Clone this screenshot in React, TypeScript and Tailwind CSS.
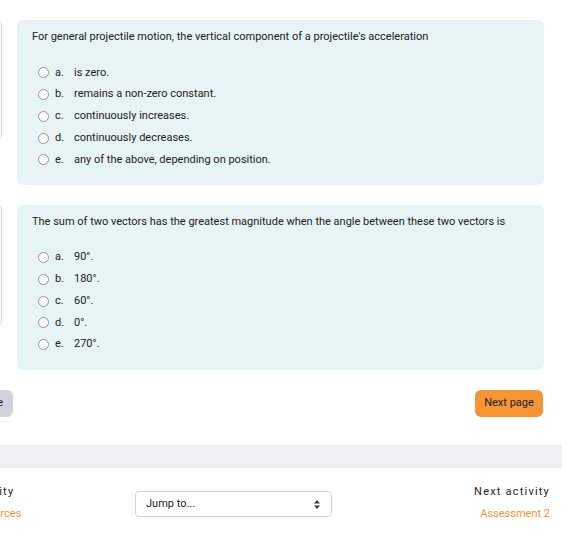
import React from "react";

const QUESTIONS = [
  {
    text: "For general projectile motion, the vertical component of a projectile's acceleration",
    options: [
      "is zero.",
      "remains a non-zero constant.",
      "continuously increases.",
      "continuously decreases.",
      "any of the above, depending on position.",
    ],
  },
  {
    text: "The sum of two vectors has the greatest magnitude when the angle between these two vectors is",
    options: ["90°.", "180°.", "60°.", "0°.", "270°."],
  },
];

const LETTERS = ["a.", "b.", "c.", "d.", "e."];

function Question({ text, options }: { text: string; options: string[] }) {
  return (
    <div className="flex gap-[15px]">
      <div className="h-[120px] w-[84px] shrink-0 rounded border border-[#dee2e6] bg-[#f8f9fa]" />
      <div className="flex-1 rounded-md bg-[#e7f3f5] px-[15px] pb-[14px] pt-[9px]">
        <p className="leading-[16px]">{text}</p>
        <div className="mt-[17px]">
          {options.map((opt, i) => (
            <div key={i} className="flex h-[21.75px] items-center pl-[6px]">
              <span className="h-[11px] w-[11px] shrink-0 rounded-full border border-[#8f959e] bg-white" />
              <span className="ml-[6px] w-[19px]">{LETTERS[i]}</span>
              <span>{opt}</span>
            </div>
          ))}
        </div>
      </div>
    </div>
  );
}

export default function App() {
  return (
    <div
      className="w-[562px] overflow-hidden bg-white text-[11px] text-[#1d2125]"
      style={{ fontFamily: "Roboto, 'Liberation Sans', sans-serif" }}
    >
      <div className="ml-[-82px] w-[626px] pt-[20px]">
        <div className="flex flex-col gap-[20px]">
          {QUESTIONS.map((q, i) => (
            <Question key={i} text={q.text} options={q.options} />
          ))}
        </div>
        <div className="mt-[20px] flex justify-between">
          <button
            type="button"
            className="h-[27px] w-[95px] rounded-md bg-[#ced4da] pr-[10px] text-right text-[#1d2125]"
          >
            Previous page
          </button>
          <button
            type="button"
            className="mr-px h-[27px] w-[68px] rounded-md bg-[#f79433] text-[#1d2125]"
          >
            Next page
          </button>
        </div>
      </div>

      <div className="mt-[28px] h-[23px] bg-[#eff0f3]" />

      <div className="flex items-center pb-[20px] pt-[16px]">
        <div className="ml-[-86px] w-[190px] shrink-0">
          <div className="tracking-[1.2px] text-[#1d2125]">Previous activity</div>
          <div className="ml-[-11px] mt-[6px] text-[#f79433]">Supplemental resources</div>
        </div>
        <div className="ml-[31px] mt-[2px] flex h-[26px] w-[197px] items-center justify-between rounded border border-[#ced4da] pl-[10px] pr-[11px]">
          <span>Jump to...</span>
          <svg width="6" height="9" viewBox="0 0 6 9">
            <path d="M3 0L6 3.5H0Z M3 9L0 5.5H6Z" fill="#343a40" />
          </svg>
        </div>
        <div className="ml-auto mr-[12px] text-right">
          <div className="tracking-[1.2px]">Next activity</div>
          <div className="mt-[6px] text-[#f79433]">Assessment 2</div>
        </div>
      </div>
    </div>
  );
}
